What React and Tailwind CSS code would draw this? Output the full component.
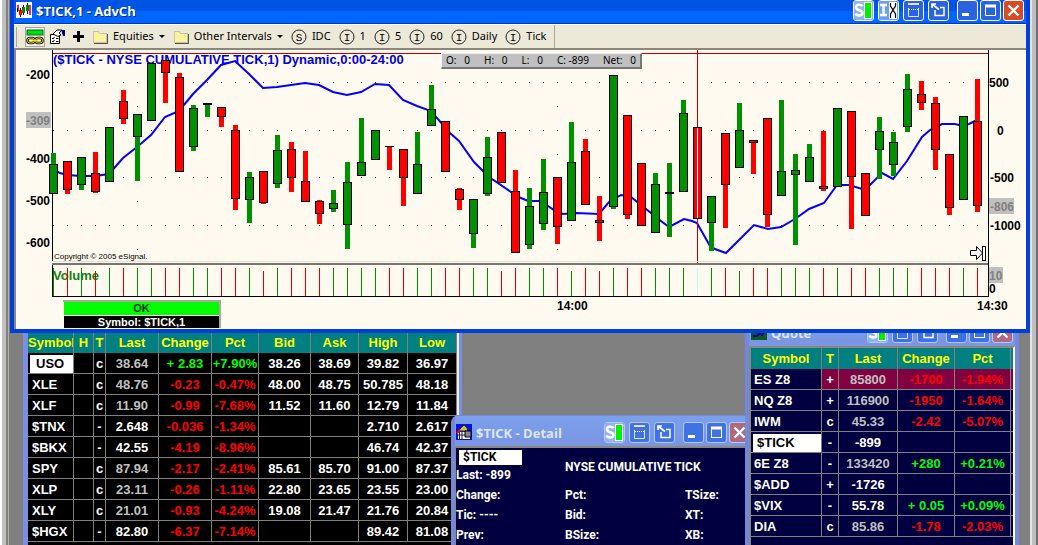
const G = 'G';
const R = 'R';

// [color, high, open/close top, open/close bottom, low]
const CANDLES = [
  [G, 153, 164, 194, 194], [R, 161, 161, 190, 194], [G, 157, 157, 185, 190], [R, 152, 173, 192, 193],
  [G, 127, 127, 182, 182], [R, 90, 101, 119, 124], [G, 114, 114, 137, 181], [G, 63, 63, 121, 121],
  [R, 60, 60, 73, 103], [R, 73, 77, 172, 172], [G, 105, 108, 147, 151], [G, 103, 103, 105, 117],
  [R, 107, 107, 117, 127], [R, 125, 130, 199, 210], [G, 172, 177, 200, 223], [R, 171, 171, 203, 204],
  [G, 135, 150, 184, 188], [R, 142, 149, 178, 192], [R, 151, 181, 202, 202], [R, 200, 201, 214, 224],
  [G, 190, 203, 209, 212], [G, 162, 182, 225, 249], [G, 118, 162, 176, 176], [G, 130, 130, 160, 160],
  [R, 146, 146, 147, 170], [R, 149, 149, 178, 206], [G, 132, 164, 194, 194], [G, 85, 109, 126, 126],
  [R, 121, 121, 172, 172], [R, 188, 189, 200, 210], [G, 199, 199, 234, 248], [G, 137, 157, 194, 196],
  [R, 132, 132, 183, 183], [R, 170, 191, 253, 253], [G, 188, 206, 245, 249], [G, 159, 192, 224, 230],
  [R, 177, 177, 227, 244], [G, 122, 162, 221, 221], [R, 139, 151, 205, 205], [R, 196, 220, 223, 241],
  [G, 75, 75, 207, 209], [R, 115, 115, 215, 219], [R, 163, 163, 226, 226], [G, 173, 184, 233, 233],
  [G, 163, 192, 194, 237], [G, 100, 113, 192, 192], [R, 127, 127, 219, 219], [G, 196, 196, 223, 251],
  [R, 133, 133, 185, 228], [G, 103, 130, 168, 168], [R, 140, 140, 143, 174], [R, 118, 118, 215, 227],
  [G, 100, 171, 196, 196], [G, 154, 170, 175, 245], [G, 144, 157, 182, 182], [R, 131, 186, 189, 191],
  [G, 108, 108, 187, 187], [R, 111, 111, 177, 229], [R, 173, 173, 216, 216], [G, 117, 131, 150, 179],
  [G, 132, 142, 165, 176], [G, 74, 89, 127, 132], [R, 81, 94, 103, 110], [R, 97, 103, 150, 170],
  [R, 154, 154, 208, 215], [G, 116, 116, 200, 200], [R, 79, 121, 206, 212],
];

const SHORT_VOLUME = [3, 15, 32, 37, 39, 49];

const TREND =
  '53,169 60,173 67,175 81,176 95,176 109,174 123,158 137,147 151,135 165,117 179,111 193,94 207,80 221,65 235,61 249,74 263,88 277,87 291,85 305,83 319,85 333,92 347,95 361,92 375,84 389,85 403,100 417,106 431,111 450,133 459,141 474,162 483,171 492,179 511,192 521,198 528,201 539,201 548,206 554,210 563,214 576,213 599,214 609,202 621,195 631,197 646,209 661,221 669,227 684,219 692,221 697,223 710,246 715,249 726,253 754,225 768,229 781,227 795,219 809,209 824,203 837,185 849,185 862,189 870,185 882,173 893,179 907,161 922,137 930,130 942,124 955,124 959,125 969,124 977,120';

const WATCHLIST = [
  ['USO', 'c', '38.64', '+ 2.83', '+7.90%', '38.26', '38.69', '39.82', '36.97'],
  ['XLE', 'c', '48.76', '-0.23', '-0.47%', '48.00', '48.75', '50.785', '48.18'],
  ['XLF', 'c', '11.90', '-0.99', '-7.68%', '11.52', '11.60', '12.79', '11.84'],
  ['$TNX', '-', '2.648', '-0.036', '-1.34%', '', '', '2.710', '2.617'],
  ['$BKX', '-', '42.55', '-4.19', '-8.96%', '', '', '46.74', '42.37'],
  ['SPY', 'c', '87.94', '-2.17', '-2.41%', '85.61', '85.70', '91.00', '87.37'],
  ['XLP', 'c', '23.11', '-0.26', '-1.11%', '22.80', '23.65', '23.55', '23.00'],
  ['XLY', 'c', '21.01', '-0.93', '-4.24%', '19.08', '21.47', '21.76', '20.84'],
  ['$HGX', '-', '82.80', '-6.37', '-7.14%', '', '', '89.42', '81.08'],
];

const QUOTES = [
  ['ES Z8', '+', '85800', '-1700', '-1.94%', true],
  ['NQ Z8', '+', '116900', '-1950', '-1.64%', true],
  ['IWM', 'c', '45.33', '-2.42', '-5.07%', true],
  ['$TICK', '-', '-899', '', '', false],
  ['6E Z8', '-', '133420', '+280', '+0.21%', true],
  ['$ADD', '+', '-1726', '', '', false],
  ['$VIX', '-', '55.78', '+ 0.05', '+0.09%', false],
  ['DIA', 'c', '85.86', '-1.78', '-2.03%', true],
];

const barX = (i) => 53 + i * 14;
const changeColor = (v) => (v.startsWith('+') ? 'text-[#00ff00]' : 'text-[#ff0000]');

const TITLE_GLYPHS = {
  signal: (
    <>
      <rect x="1" y="1" width="19" height="19" fill="#8fb4f0" />
      <path d="M9.5 6.2C8.5 4.4 3 4 3 7.2c0 3.6 6.500 2.400 6.500 5.800 0 3.200-6 3-7 .6" fill="none" stroke="#fff" strokeWidth="2.600" />
      <rect x="11.500" y="2.500" width="7" height="16" fill="#00f000" stroke="#fff" />
    </>
  ),
  interval: (
    <>
      <rect x="1" y="1" width="19" height="19" fill="#6f9ff0" />
      <path d="M2 5h7M2 15h7M5.500 5v10" stroke="#fff" strokeWidth="2.500" />
      <rect x="11" y="2" width="8" height="17" fill="#fff" />
      <path d="M12.500 3v3l5 8v4M17.500 3v3l-5 8v4" fill="none" stroke="#000" strokeWidth="1.200" />
    </>
  ),
  dock: (
    <>
      <path d="M5 4h11" stroke="#f4d9c8" strokeWidth="2" />
      <path d="M5.500 8v8.500h10V8" fill="none" stroke="#dce8ff" />
      <path d="M6 9.500h10" stroke="#fff" strokeDasharray="1 1" />
    </>
  ),
  popout: (
    <>
      <path d="M7 10v5.500h9V7.500h-4" fill="none" stroke="#fff" strokeWidth="1.500" />
      <path d="M4 8V4h4M4.500 4.500l6.500 5" fill="none" stroke="#fff" strokeWidth="1.700" />
    </>
  ),
  minimize: <path d="M5 14.500h7" stroke="#fff" strokeWidth="3" />,
  maximize: (
    <>
      <rect x="5.500" y="5.500" width="10" height="10" fill="none" stroke="#fff" />
      <path d="M5 6h11" stroke="#fff" strokeWidth="3" />
    </>
  ),
  close: <path d="M5.500 5.500l10 10M15.500 5.500l-10 10" stroke="#fff" strokeWidth="2.400" />,
};

const TitleButton = ({ kind, active }) => {
  let bg = active ? 'bg-[#2a62e0]' : 'bg-[#3f73e4]';
  if (kind === 'close') bg = active ? 'bg-[#dc4a24]' : 'bg-[#b06a80]';
  return (
    <button
      type="button"
      aria-label={kind}
      className={`h-[21px] w-[21px] shrink-0 overflow-hidden rounded-[3px] border ${bg} ${
        active ? 'border-white' : 'border-[#b4c8f4]'
      }`}
    >
      <svg viewBox="1 1 19 19" className="block h-full w-full">
        {TITLE_GLYPHS[kind]}
      </svg>
    </button>
  );
};

const TitleButtons = ({ active, tools }) => (
  <div className="ml-auto flex gap-2">
    <div className="flex gap-1">
      {tools.map((t) => (
        <TitleButton key={t} kind={t} active={active} />
      ))}
    </div>
    <div className="flex gap-0.5">
      <TitleButton kind="minimize" active={active} />
      <TitleButton kind="maximize" active={active} />
      <TitleButton kind="close" active={active} />
    </div>
  </div>
);

const Folder = () => (
  <svg viewBox="0 0 16 14" className="h-3.5 w-4" shapeRendering="crispEdges">
    <path d="M1 3l1-2h4l1 2h7v9H1z" fill="#fbf3a0" stroke="#c8c4a4" />
    <path d="M15 4v9H2" fill="none" stroke="#555" />
  </svg>
);

const Circled = ({ letter }) => (
  <svg viewBox="0 0 16 16" className="h-4 w-4">
    <circle cx="8" cy="8" r="7" fill="none" stroke="#222" />
    <text x="8" y="11.500" textAnchor="middle" className="font-['Liberation_Mono'] text-[11px]">
      {letter}
    </text>
  </svg>
);

const Toolbar = () => (
  <div className="flex h-[26px] items-center border-b-2 border-b-[#8a887c] border-t border-t-white bg-[#ece9d8] font-['Noto_Sans',sans-serif] text-[11px] text-black">
    <div className="flex h-full items-center border-r border-[#aca899] pr-2">
      <span className="ml-0.5 h-5 w-px bg-[#aca899]" />
      <button type="button" aria-label="Link" className="ml-2 flex h-5 w-5 items-center justify-center border border-[#aca899] bg-[#f6f4ec]">
        <svg viewBox="0 0 18 16" className="h-4 w-[18px]">
          <rect x="1" y="1" width="16" height="5" fill="#00e000" stroke="#064" />
          <rect x="1.500" y="9" width="7" height="5" rx="2.500" fill="none" stroke="#000" strokeWidth="2.500" />
          <rect x="9.500" y="9" width="7" height="5" rx="2.500" fill="none" stroke="#000" strokeWidth="2.500" />
          <rect x="1.500" y="9" width="7" height="5" rx="2.500" fill="none" stroke="#ffe600" />
          <rect x="9.500" y="9" width="7" height="5" rx="2.500" fill="none" stroke="#ffe600" />
          <path d="M6 11.500h6" stroke="#ffe600" strokeWidth="1.500" />
        </svg>
      </button>
      <button type="button" aria-label="Properties" className="ml-1">
        <svg viewBox="0 0 16 16" className="block h-4 w-4">
          <path d="M1.500 5.500h9v9h-9z" fill="#fff" stroke="#000" />
          <path d="M3 9l1 1 1.500-2M7 9.500h2.500M3 12l1 1 1.500-2M7 12.500h2.500" fill="none" stroke="#000" />
          <path d="M4 5l4-4h5l-3 3 2 2-3 1.500z" fill="#fff" stroke="#000" />
          <path d="M12 1h4v6h-2z" fill="#000080" />
        </svg>
      </button>
      <button type="button" aria-label="Add" className="ml-2">
        <svg viewBox="0 0 11 11" className="block h-[11px] w-[11px]">
          <path d="M5.500 0v11M0 5.500h11" stroke="#000" strokeWidth="3" />
        </svg>
      </button>
      {['Equities', 'Other Intervals'].map((label) => (
        <button key={label} type="button" className="ml-2 flex items-center gap-[5px] whitespace-nowrap first-of-type:ml-2.5">
          <Folder />
          {label}
          <span className="border-x-[3px] border-t-[3px] border-x-transparent border-t-black" />
        </button>
      ))}
      {['IDC', '1', '5', '60', 'Daily', 'Tick'].map((label) => (
        <button key={label} type="button" className="ml-2 flex items-center gap-[5px]">
          <Circled letter={label === 'IDC' ? 'S' : 'I'} />
          {label}
        </button>
      ))}
    </div>
  </div>
);

const Chart = () => (
  <svg
    viewBox="16 50 1009 279"
    className="block w-full bg-[#fffaf0] font-['Liberation_Sans',Arial,sans-serif] text-[13px] font-bold"
  >
    <g shapeRendering="crispEdges">
      {[82, 130, 177, 225].map((y) =>
        CANDLES.map((_, i) => <rect key={`${y}-${i}`} x={barX(i)} y={y} width="1" height="1" fill="#800000" />)
      )}
      {[106, 154, 201, 249].map((y) =>
        [137, 557].map((x) => <rect key={`${y}-${x}`} x={x} y={y} width="1" height="1" fill="#800000" />)
      )}
      <rect x="53" y="53" width="936" height="1" fill="#c00000" />
      <rect x="52" y="50" width="1" height="211" fill="#000" />
      <rect x="988" y="50" width="1" height="247" fill="#000" />
    </g>

    <text x="53" y="64" fill="#0000e0">
      ($TICK - NYSE CUMULATIVE TICK,1) Dynamic,0:00-24:00
    </text>
    <polyline points={TREND} fill="none" stroke="#0000ff" strokeWidth="2" />

    <g shapeRendering="crispEdges">
      {CANDLES.map(([color, high, top, bottom, low], i) => {
        const fill = color === G ? '#009000' : '#ff0000';
        return (
          <g key={i}>
            <rect x={barX(i) - 2} y={high} width="5" height={low - high} fill={fill} />
            <rect x={barX(i) - 4} y={top} width="9" height={bottom - top} fill="#000" />
            {bottom - top > 2 ? (
              <rect x={barX(i) - 3} y={top + 1} width="7" height={bottom - top - 2} fill={fill} />
            ) : null}
          </g>
        );
      })}
      <rect x="697" y="50" width="1" height="77" fill="#b00000" />
      <rect x="697" y="128" width="1" height="90" fill="#fff" />
      <rect x="697" y="219" width="1" height="44" fill="#b00000" />

      <rect x="52" y="261" width="936" height="1" fill="#dedcd4" />
      <rect x="52" y="263" width="936" height="2" fill="#77756c" />
      <rect x="52" y="265" width="1" height="32" fill="#000" />
      <rect x="52" y="296" width="937" height="1" fill="#000" />
    </g>

    <text x="53" y="280" fill="#108010">Volume</text>
    <g shapeRendering="crispEdges">
      {CANDLES.map(([color], i) => {
        const y = SHORT_VOLUME.includes(i) ? 271 : 268;
        let fill = color === G ? '#009000' : '#e00000';
        if (i === 46) fill = '#c0ffff';
        return <rect key={i} x={barX(i)} y={y} width="1" height={296 - y} fill={fill} />;
      })}
    </g>

    <text x="54" y="259" className="text-[8px] font-normal">Copyright © 2005 eSignal.</text>

    <rect x="26" y="112" width="25" height="16" fill="#c0c0c0" />
    <rect x="989" y="198" width="25" height="16" fill="#c0c0c0" />
    <rect x="989" y="267" width="14" height="16" fill="#c0c0c0" />
    <g textAnchor="end" className="text-[12px]">
      <text x="50" y="79">-200</text>
      <text x="50" y="125" fill="#808080">-309</text>
      <text x="50" y="163">-400</text>
      <text x="50" y="205">-500</text>
      <text x="50" y="247">-600</text>
    </g>
    <g className="text-[12px]">
      <text x="989" y="87">500</text>
      <text x="997" y="135">0</text>
      <text x="990" y="182">-500</text>
      <text x="990" y="211" fill="#808080">-806</text>
      <text x="990" y="230">-1000</text>
      <text x="989" y="280" fill="#808080">10</text>
      <text x="989" y="293">0</text>
      <text x="557" y="310">14:00</text>
      <text x="977" y="310">14:30</text>
    </g>
    <path d="M970.500 250.500h6v-4l6 6.500-6 6.500v-4h-6z" fill="#fff" stroke="#000" />
    <rect x="982.500" y="246.500" width="3" height="14" fill="#fff" stroke="#000" />
  </svg>
);

const ChartWindow = () => (
  <section className="absolute left-[10px] right-2 top-0 z-40 border-x-4 border-b-4 border-[#0040d8] bg-[#fffaf0]">
    <header className="flex h-6 items-start border-b border-[#0038b0] bg-linear-to-b from-[#0054e3] from-50% to-[#0066ff] to-50% pr-0.5">
      <svg viewBox="0 0 16 16" className="ml-0.5 mt-0.5 h-4 w-4">
        <rect width="16" height="16" fill="#fff" />
        <path d="M2 3v6M14 3v10" stroke="#f0208c" strokeWidth="2" />
        <path d="M1.500 6v4M4.500 6v9M7.500 3v10M11.500 1v11" stroke="#000" />
        <path d="M3 8h3v5H3z" fill="#f00" />
        <path d="M6 5h3v6H6zM10 3h3v6h-3z" fill="#080" />
      </svg>
      <h1 className="ml-1 text-[13px] leading-[22px] font-bold text-white font-['Open_Sans',sans-serif] [text-shadow:1px_1px_#002a80]">
        $TICK,1 - AdvCh
      </h1>
      <TitleButtons active tools={['signal', 'interval', 'dock', 'popout']} />
    </header>
    <Toolbar />
    <div className="relative border-l-2 border-[#8a887c] pr-px">
      <Chart />
      <div className="absolute left-[425px] top-[3px] flex h-4 w-[201px] items-center justify-between whitespace-pre border border-b-2 border-r-2 border-[#f4f4f4] border-b-[#777] border-r-[#777] bg-[#c0c0c0] px-1 font-['Noto_Sans',sans-serif] text-[10px]">
        <span>O:   0</span>
        <span>H:   0</span>
        <span>L:   0</span>
        <span>C: -899</span>
        <span>Net:   0</span>
      </div>
      <div className="absolute bottom-px left-[47px] w-[158px] border-r-2 border-t-2 border-[#aaa8a0] pl-px text-center font-['Liberation_Sans',Arial,sans-serif] text-[11px] font-bold">
        <div className="h-[13px] bg-[#00ff00] leading-[13px] text-[#003000]">OK</div>
        <div className="mt-px h-3 bg-black leading-[13px] text-white">Symbol: $TICK,1</div>
      </div>
    </div>
  </section>
);

const headCell = 'h-[21px] overflow-hidden border-r border-[#808080] p-0 text-center';
const cell = 'h-[21px] overflow-hidden border-b border-r border-[#808080] p-0 pt-0.5 text-center';
const symbolCell = 'h-[21px] overflow-hidden border-b border-r border-[#808080] p-0 pt-0.5 text-left';

const WatchWindow = () => (
  <section className="absolute bottom-0 left-[23px] top-[332px] overflow-hidden border-l-[5px] border-r-[3px] border-[#7a8fe4] bg-black pr-0.5 shadow-[inset_-2px_0_#f0f0e8]">
    <table className="w-[429px] table-fixed border-separate border-spacing-0 whitespace-nowrap font-['Liberation_Sans',Arial,sans-serif] text-[13px] font-bold text-white">
      <colgroup>
        <col className="w-[46px]" />
        <col className="w-[20px]" />
        <col className="w-[12px]" />
        <col className="w-[53px]" />
        <col className="w-[53px]" />
        <col className="w-[47px]" />
        <col className="w-[52px]" />
        <col className="w-[48px]" />
        <col className="w-[49px]" />
        <col className="w-[49px]" />
      </colgroup>
      <thead className="bg-[#008080] leading-5 text-[#ffff00]">
        <tr>
          {['Symbol', 'H', 'T', 'Last', 'Change', 'Pct', 'Bid', 'Ask', 'High', 'Low'].map((h) => (
            <th key={h} className={headCell}>{h}</th>
          ))}
        </tr>
      </thead>
      <tbody className="leading-[18px]">
        {WATCHLIST.map(([symbol, t, last, change, pct, ...prices], i) => (
          <tr key={symbol}>
            <td className={symbolCell}>
              {i === 0 ? (
                <span className="ml-0.5 block h-[18px] bg-white pl-1.5 text-black">{symbol}</span>
              ) : (
                <span className="pl-1">{symbol}</span>
              )}
            </td>
            <td className={cell} />
            <td className={cell}>{t}</td>
            <td className={`${cell} ${t === 'c' ? 'text-[#c0c0c0]' : ''}`}>{last}</td>
            <td className={`${cell} ${changeColor(change)}`}>{change}</td>
            <td className={`${cell} ${changeColor(pct)}`}>{pct}</td>
            {prices.map((p, k) => (
              <td key={k} className={cell}>{p}</td>
            ))}
          </tr>
        ))}
      </tbody>
    </table>
  </section>
);

const InactiveTitle = ({ icon, children }) => (
  <header className="flex h-[30px] items-start bg-linear-to-b from-[#7ba0ec] to-[#7b95e2] pr-0.5 pt-1.5">
    {icon}
    <h2 className="ml-1 text-[13px] leading-[22px] font-bold text-[#dce6fa] font-['Open_Sans',sans-serif]">{children}</h2>
    <TitleButtons tools={['signal', 'dock', 'popout']} />
  </header>
);

const DETAIL_ROWS = [
  ['Change:', 'Pct:', 'TSize:'],
  ['Tic: ----', 'Bid:', 'XT:'],
  ['Prev:', 'BSize:', 'XB:'],
];

const DetailWindow = () => (
  <section className="absolute bottom-0 left-[451px] right-[282px] top-[415px] z-10 flex flex-col rounded-t-lg border-x-4 border-t border-[#7288dc] bg-[#7b95e2]">
    <InactiveTitle
      icon={
        <svg viewBox="0 0 16 16" className="ml-px mt-0.5 h-4 w-4">
          <rect width="16" height="16" fill="#0010e0" />
          <path d="M4 5l4-4 3 3 1 3H3z" fill="#c8c040" stroke="#333" />
          <path d="M2 8h12v7H2z" fill="#fff" />
          <path d="M3.500 8v7M6 8v7M2 11h8" stroke="#222" />
          <path d="M9 7h6v6H9z" fill="#888" stroke="#000" />
          <path d="M1 9l3-3" stroke="#f00" strokeWidth="2" />
        </svg>
      }
    >
      $TICK - Detail
    </InactiveTitle>
    <div className="flex-1 border-l border-t-2 border-[#8a887c] bg-[#000040] font-['Roboto',sans-serif] text-[12px] font-bold leading-5 text-white">
      <div className="grid grid-cols-[109px_1fr]">
        <div>
          <div className="ml-[3px] mt-0.5 h-[15px] w-[63px] bg-white pl-1 leading-[15px] text-black">$TICK</div>
          <div>Last: -899</div>
        </div>
        <div className="self-center">NYSE CUMULATIVE TICK</div>
      </div>
      {DETAIL_ROWS.map((row) => (
        <div key={row[0]} className="grid grid-cols-[109px_120px_1fr]">
          {row.map((label) => (
            <span key={label}>{label}</span>
          ))}
        </div>
      ))}
    </div>
  </section>
);

const QuoteWindow = () => (
  <section className="absolute bottom-0 right-[19px] top-[316px] z-20 overflow-hidden border-x-4 border-[#7288dc] bg-[#7b95e2]">
    <InactiveTitle
      icon={
        <svg viewBox="0 0 16 16" className="ml-0.5 mt-0.5 h-4 w-4">
          <rect width="16" height="16" fill="#085c20" />
          <path d="M2 12h4l3-3 2 2 3-4" fill="none" stroke="#0000a0" strokeWidth="2" />
        </svg>
      }
    >
      Quote
    </InactiveTitle>
    <div className="h-full border-l-2 border-r-2 border-t-2 border-[#8a887c] border-r-white bg-[#000040]">
      <table className="w-[262px] table-fixed border-separate border-spacing-0 whitespace-nowrap font-['Liberation_Sans',Arial,sans-serif] text-[13px] font-bold text-white">
        <colgroup>
          <col className="w-[71px]" />
          <col className="w-[17px]" />
          <col className="w-[59px]" />
          <col className="w-[57px]" />
          <col className="w-[56px]" />
          <col className="w-[2px]" />
        </colgroup>
        <thead className="bg-[#008080] leading-5 text-[#ffff00]">
          <tr>
            {['Symbol', 'T', 'Last', 'Change', 'Pct'].map((h) => (
              <th key={h} className={headCell}>{h}</th>
            ))}
            <td className="p-0" />
          </tr>
        </thead>
        <tbody className="leading-[18px]">
          {QUOTES.map(([symbol, t, last, change, pct, dim], i) => (
            <tr key={symbol} className={i === 0 ? 'bg-[#800040]' : ''}>
              <td className={`${symbolCell} bg-[#000040]`}>
                {symbol === '$TICK' ? (
                  <span className="ml-0.5 block h-[18px] bg-white pl-1 text-black">{symbol}</span>
                ) : (
                  <span className="pl-[3px]">{symbol}</span>
                )}
              </td>
              <td className={cell}>{t}</td>
              <td className={`${cell} ${dim ? 'text-[#c0c0c0]' : ''}`}>{last}</td>
              <td className={`${cell} ${changeColor(change)}`}>{change}</td>
              <td className={`${cell} ${changeColor(pct)}`}>{pct}</td>
              <td className="border-b border-[#808080] p-0" />
            </tr>
          ))}
        </tbody>
      </table>
    </div>
  </section>
);

const App = () => (
  <main className="relative h-screen min-h-[360px] overflow-hidden bg-[#808080]">
    <div className="absolute inset-y-0 left-0 w-1.5 border-l-2 border-white bg-[#c0c0c0]" />
    <div className="absolute inset-y-0 left-2 w-px bg-[#b8b4a0]" />
    <div className="absolute inset-y-0 right-0 w-2 border-l-2 border-r-2 border-l-[#e4e4e0] border-r-[#707070] bg-[#c0c0c0]" />
    <WatchWindow />
    <DetailWindow />
    <QuoteWindow />
    <ChartWindow />
  </main>
);

export default App;
